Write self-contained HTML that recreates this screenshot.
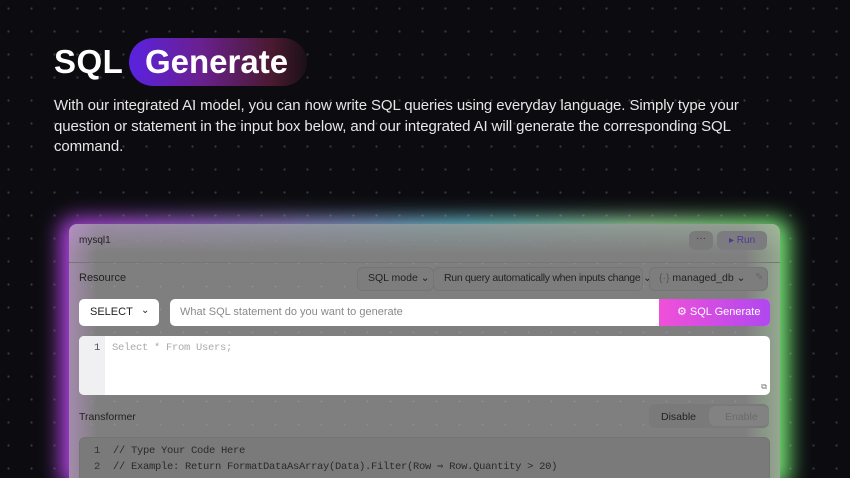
<!DOCTYPE html>
<html><head><meta charset="utf-8"><style>
*{margin:0;padding:0;box-sizing:border-box}
html,body{width:850px;height:478px;overflow:hidden}
body{background:#0c0c10;font-family:"Liberation Sans",sans-serif;position:relative}
.wrap{position:absolute;left:0;top:0;width:850px;height:478px;overflow:hidden}
.dots{position:absolute;inset:0;background-image:radial-gradient(circle,#3a3a44 1px,transparent 1.2px);background-size:23px 23px;background-position:-3px -3px}
h1{position:absolute;left:54px;top:42px;font-size:33px;line-height:40px;font-weight:bold;color:#fff;letter-spacing:0.5px}
.pill{position:absolute;left:129px;top:38px;width:178px;height:48px;border-radius:24px;background:linear-gradient(90deg,#5a22e0 0%,#6a2090 40%,#4a1a30 80%,#1a1016 100%)}
.pill span{position:absolute;left:16px;top:4px;font-size:33px;line-height:40px;font-weight:bold;color:#fff}
p.d{position:absolute;left:54px;top:96px;width:720px;font-size:15px;line-height:20.5px;color:#e6e6e6;letter-spacing:-0.1px}
.glow{position:absolute;left:60px;top:218px;width:730px;height:270px;border-radius:14px;filter:blur(10px);background:linear-gradient(90deg,#b040e0 0%,#9a8ad0 30%,#70c8d8 55%,#a0e0a0 80%,#70e070 100%)}
.panel{position:absolute;left:69px;top:224px;width:711px;height:254px;border-radius:8px 8px 0 0;background:#7f7f7f;overflow:hidden}
.panel .tint{position:absolute;inset:0;background:linear-gradient(90deg,rgba(200,150,220,.5) 0%,rgba(128,128,128,0) 4%,rgba(128,128,128,0) 95%,rgba(170,210,160,.5) 100%)}
.panel .tint2{position:absolute;left:0;right:0;top:0;height:30px;background:linear-gradient(90deg,rgba(190,150,210,.5),rgba(150,190,200,.4) 50%,rgba(180,210,170,.4));-webkit-mask:linear-gradient(180deg,#000,transparent)}
.pd{position:absolute;inset:0;background-image:radial-gradient(circle,#8e8e8e 0.8px,transparent 1px);background-size:23px 23px;background-position:-12px 5px}
.t{position:absolute;font-size:11px;color:#222;white-space:nowrap}
.box{position:absolute;border:1px solid #757575;border-radius:6px;background:#7d7d7d}
.white{position:absolute;background:#fff;border-radius:5px}
.mono{font-family:"Liberation Mono",monospace;font-size:10.5px;letter-spacing:-0.3px}
</style></head><body>
<div class="wrap">
<div class="dots"></div>
<h1>SQL</h1>
<div class="pill"><span>Generate</span></div>
<p class="d">With our integrated AI model, you can now write SQL queries using everyday language. Simply type your question or statement in the input box below, and our integrated AI will generate the corresponding SQL command.</p>
<div class="glow"></div>
<div class="panel">
<div class="tint2"></div><div class="tint"></div><div class="pd"></div>
<div class="t" style="left:10px;top:11px;font-size:10px">mysql1</div>
<div style="position:absolute;left:0;right:0;top:38px;height:1px;background:#767676"></div>
<div class="box" style="left:620px;top:7px;width:24px;height:19px;border:none;background:#7a7a7a;color:#333;font-size:10px;text-align:center;line-height:15px">···</div>
<div class="box" style="left:648px;top:7px;width:50px;height:19px;border:none;background:#7c7c80;color:#4a3a90;font-size:10px;line-height:19px;padding-left:12px">▸ Run</div>
<div class="t" style="left:10px;top:48px">Resource</div>
<div class="box" style="left:288px;top:43px;width:77px;height:24px"></div>
<div class="t" style="left:299px;top:48px;font-size:10.5px">SQL mode ⌄</div>
<div class="box" style="left:364px;top:43px;width:210px;height:24px"></div>
<div class="t" style="left:375px;top:48px;font-size:10.5px;letter-spacing:-0.3px">Run query automatically when inputs change ⌄</div>
<div class="box" style="left:580px;top:43px;width:119px;height:24px"></div>
<div class="t" style="left:590px;top:48px;font-size:10.5px"><span style="color:#555">{·}</span> managed_db ⌄</div>
<div class="t" style="left:686px;top:48px;color:#666;font-size:10px">✎</div>
<div class="white" style="left:10px;top:75px;width:80px;height:27px"></div>
<div class="t" style="left:21px;top:82px;font-size:11px;color:#222">SELECT</div>
<div class="t" style="left:72px;top:81px;font-size:10px">⌄</div>
<div class="white" style="left:101px;top:75px;width:600px;height:27px;overflow:hidden">
<div class="t" style="left:10px;top:7px;color:#8a8a8a">What SQL statement do you want to generate</div>
<div style="position:absolute;left:489px;top:0;width:111px;height:27px;background:linear-gradient(90deg,#f050d8,#b048f0);color:#fff;font-size:11px;line-height:27px;padding-left:18px">⚙ SQL Generate</div>
</div>
<div class="white" style="left:10px;top:112px;width:691px;height:59px;overflow:hidden">
<div style="position:absolute;left:0;top:0;width:26px;height:59px;background:#f0f0f2"></div>
<div class="mono" style="position:absolute;left:15px;top:6px;color:#555">1</div>
<div class="mono" style="position:absolute;left:33px;top:6px;color:#aaa">Select * From Users;</div>
<div style="position:absolute;right:3px;bottom:3px;font-size:8px;color:#777">⧉</div>
</div>
<div class="t" style="left:10px;top:187px;font-size:10.5px">Transformer</div>
<div class="box" style="left:580px;top:180px;width:120px;height:24px;border:none;background:#7a7a7a"></div>
<div class="t" style="left:592px;top:187px;font-size:10.5px">Disable</div>
<div class="box" style="left:640px;top:182px;width:60px;height:20px;border:none;background:#828282"></div>
<div class="t" style="left:656px;top:187px;font-size:10.5px;color:#6a6a6a">Enable</div>
<div class="box" style="left:10px;top:213px;width:691px;height:60px;background:#7a7a7a;border-color:#747474"></div>
<div class="mono" style="position:absolute;left:25px;top:219px;color:#333;line-height:16px">1<br>2</div>
<div class="mono" style="position:absolute;left:44px;top:219px;color:#2a2a2a;line-height:16px">// Type Your Code Here<br>// Example: Return FormatDataAsArray(Data).Filter(Row ⇒ Row.Quantity &gt; 20)</div>
</div>
</div>
</body></html>
